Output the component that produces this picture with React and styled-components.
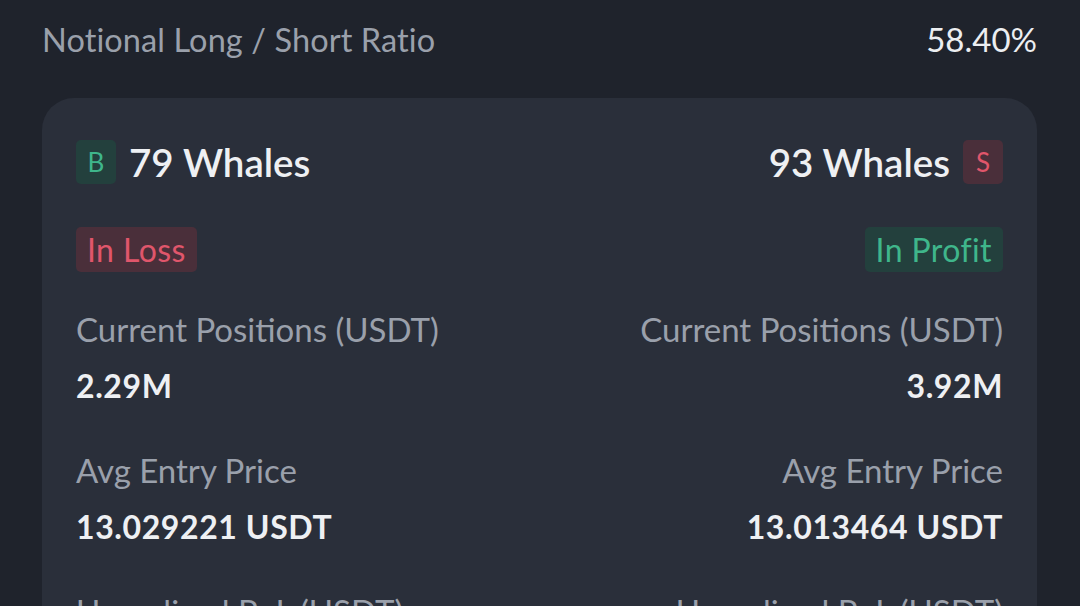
import React from "react";
import styled, { createGlobalStyle } from "styled-components";

const Global = createGlobalStyle`
  html, body { margin: 0; padding: 0; background: #1f232c; }
  body { font-family: Lato, "Noto Sans", sans-serif; -webkit-font-smoothing: antialiased; }
`;

const Page = styled.div`
  width: 1080px;
  height: 606px;
  overflow: hidden;
  background: #1f232c;
  padding: 18px 43px 0 42px;
  box-sizing: border-box;
`;

const TopRow = styled.div`
  display: flex;
  justify-content: space-between;
  align-items: center;
  height: 42px;
  margin-bottom: 38px;
`;

const TopLabel = styled.span`
  font-size: 32.5px;
  color: #9aa0ab;
  letter-spacing: 0.1px;
`;

const TopValue = styled.span`
  font-size: 33px;
  color: #eceef1;
`;

const Card = styled.div`
  background: #2a2f3a;
  border-radius: 32px;
  padding: 42px 34px 0 34px;
  height: 600px;
  box-sizing: border-box;
  display: grid;
  grid-template-columns: 1fr 1fr;
`;

const Column = styled.div`
  display: flex;
  flex-direction: column;
  align-items: ${(p) => (p.$right ? "flex-end" : "flex-start")};
  text-align: ${(p) => (p.$right ? "right" : "left")};
`;

const WhaleRow = styled.div`
  display: flex;
  align-items: center;
  gap: 13px;
  height: 44px;
  margin-bottom: 43px;
`;

const SideTag = styled.span`
  width: 40px;
  height: 44px;
  border-radius: 5px;
  display: flex;
  align-items: center;
  justify-content: center;
  font-size: 26px;
  background: ${(p) => (p.$buy ? "#23403d" : "#4a2f3a")};
  color: ${(p) => (p.$buy ? "#3fb68b" : "#e0566b")};
`;

const WhaleCount = styled.span`
  font-size: 38.5px;
  font-weight: 600;
  color: #eef0f3;
`;

const StatusTag = styled.span`
  height: 45px;
  padding: 0 11px;
  border-radius: 5px;
  display: flex;
  align-items: center;
  font-size: 32px;
  letter-spacing: 0.4px;
  background: ${(p) => (p.$profit ? "#23403d" : "#4a2f3a")};
  color: ${(p) => (p.$profit ? "#3fb68b" : "#e0566b")};
  margin-bottom: 37px;
`;

const Label = styled.div`
  font-size: 33px;
  color: #9aa0ab;
  line-height: 40px;
  margin-bottom: 17px;
  white-space: nowrap;
`;

const Value = styled.div`
  font-size: 32px;
  font-weight: 700;
  letter-spacing: 0.6px;
  color: #eef0f3;
  line-height: 40px;
  margin-bottom: 44px;
  white-space: nowrap;
`;

const sides = [
  {
    right: false,
    whales: "79 Whales",
    tag: "B",
    status: "In Loss",
    profit: false,
    positions: "2.29M",
    entry: "13.029221 USDT",
  },
  {
    right: true,
    whales: "93 Whales",
    tag: "S",
    status: "In Profit",
    profit: true,
    positions: "3.92M",
    entry: "13.013464 USDT",
  },
];

export default function App() {
  return (
    <>
      <Global />
      <Page>
        <TopRow>
          <TopLabel>Notional Long / Short Ratio</TopLabel>
          <TopValue>58.40%</TopValue>
        </TopRow>
        <Card>
          {sides.map((s) => (
            <Column key={s.tag} $right={s.right}>
              <WhaleRow>
                {!s.right && <SideTag $buy>{s.tag}</SideTag>}
                <WhaleCount>{s.whales}</WhaleCount>
                {s.right && <SideTag>{s.tag}</SideTag>}
              </WhaleRow>
              <StatusTag $profit={s.profit}>{s.status}</StatusTag>
              <Label>Current Positions (USDT)</Label>
              <Value>{s.positions}</Value>
              <Label>Avg Entry Price</Label>
              <Value>{s.entry}</Value>
              <Label>Unrealized PnL (USDT)</Label>
            </Column>
          ))}
        </Card>
      </Page>
    </>
  );
}
